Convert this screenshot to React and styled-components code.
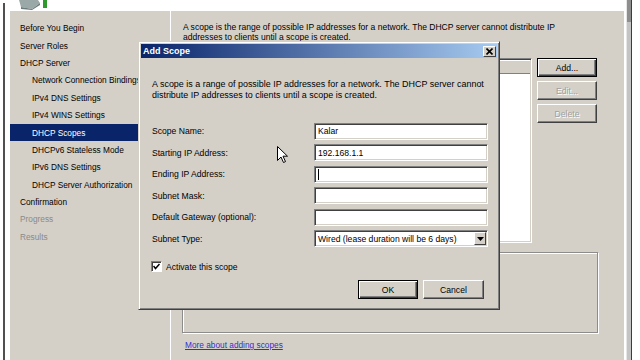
import styled, { createGlobalStyle, css } from 'styled-components';

const Global = createGlobalStyle`
  html, body { margin: 0; padding: 0; background: #fff; }
  body {
    font-family: "Liberation Sans", Arial, sans-serif;
    font-size: 8.6px;
    color: #000;
  }
`;

const Screen = styled.div`
  position: relative;
  width: 640px;
  height: 360px;
  overflow: hidden;
  display: flex;
  background: #fff;
`;

const FrameEdge = styled.div`
  width: 10px;
  flex: none;
  box-sizing: border-box;
  padding: 3px 0 0 3px;
`;

const FrameLine = styled.div`
  width: 2px;
  height: 100%;
  background: #505050;
`;

const Main = styled.div`
  flex: 1;
  display: flex;
  flex-direction: column;
`;

const TopStrip = styled.div`
  height: 11px;
  flex: none;
  padding-left: 8px;
  display: flex;
  align-items: flex-start;
`;

const Panels = styled.div`
  flex: 1;
  display: flex;
  background: #d4d0c8;
`;

const Nav = styled.div`
  width: 160px;
  flex: none;
  padding-top: 8.5px;
  border-right: 1px solid #fff;
`;

const NavItem = styled.div`
  height: 17.4px;
  display: flex;
  align-items: center;
  white-space: nowrap;
  font-size: 8.3px;
  padding-left: ${p => (p.$sub ? 22 : 10)}px;
  color: ${p => (p.$muted ? '#8a8a8a' : '#000')};
  ${p => p.$active && css`
    background: #0a246a;
    color: #fff;
  `}
`;

const Content = styled.div`
  flex: 1;
  padding: 11px 0 0 11px;
  display: flex;
  flex-direction: column;
`;

const Intro = styled.div`
  margin-left: 1px;
  line-height: 10px;
  white-space: nowrap;
  font-size: 8.55px;
`;

const ListRow = styled.div`
  margin-top: 16px;
  height: 185px;
  display: flex;
  gap: 5px;
`;

const ListBox = styled.div`
  width: 350px;
  box-sizing: border-box;
  background: #fff;
  border: 1px solid;
  border-color: #808080 #fff #fff #808080;
  box-shadow: inset 1px 1px 0 #404040, inset -1px -1px 0 #d4d0c8;
  padding: 1px;
`;

const ListHeader = styled.div`
  height: 13px;
  background: #d4d0c8;
  border-bottom: 1px solid #808080;
  box-shadow: inset 1px 1px 0 #fff;
`;

const SideButtons = styled.div`
  display: flex;
  flex-direction: column;
  gap: 4px;
`;

const WinButton = styled.button`
  width: ${p => p.$w || 60}px;
  height: 19px;
  box-sizing: border-box;
  padding: 0;
  font-family: inherit;
  font-size: 8.6px;
  background: #d4d0c8;
  color: #000;
  border: 1px solid;
  border-color: #fff #404040 #404040 #fff;
  box-shadow: inset -1px -1px 0 #808080;
  ${p => p.$default && css`
    border: 1px solid #000;
    box-shadow: inset 1px 1px 0 #fff, inset -1px -1px 0 #404040, inset -2px -2px 0 #808080;
  `}
  &:disabled {
    color: #a0a0a0;
    text-shadow: 1px 1px 0 #fff;
  }
`;

const LowerBox = styled.div`
  margin-top: 9px;
  width: 416px;
  height: 81px;
  box-sizing: border-box;
  border: 1px solid #8c8c8c;
  box-shadow: 1px 1px 0 #fff, inset 1px 1px 0 #fff;
`;

const MoreLink = styled.a`
  margin: 7px 0 0 3px;
  color: #3030d0;
  text-decoration: underline;
  font-size: 8.3px;
`;

const ScrollEdge = styled.div`
  width: 14px;
  flex: none;
  display: flex;
  padding-left: 2px;
`;

const ScrollTrack = styled.div`
  width: 4px;
  background: #c4c4c4;
  border-left: 1px solid #e6e6e6;
  border-right: 1px solid #3c3c3c;
  display: flex;
  flex-direction: column;
`;

const ScrollThumb = styled.div`
  height: 22px;
  background: #8e8e8e;
`;

const Dialog = styled.div`
  position: absolute;
  left: 138px;
  top: 41px;
  width: 362px;
  height: 269px;
  box-sizing: border-box;
  padding: 2px;
  background: #d4d0c8;
  border: 1px solid;
  border-color: #d4d0c8 #404040 #404040 #d4d0c8;
  box-shadow: inset 1px 1px 0 #fff, inset -1px -1px 0 #808080;
  display: flex;
  flex-direction: column;
`;

const TitleBar = styled.div`
  height: 14px;
  flex: none;
  display: flex;
  align-items: center;
  justify-content: space-between;
  padding: 0 1px 0 2px;
  background: linear-gradient(to right, #0a246a, #a6caf0);
  color: #fff;
  font-weight: bold;
  font-size: 9px;
`;

const CloseBox = styled.div`
  width: 13px;
  height: 11px;
  box-sizing: border-box;
  background: #d4d0c8;
  border: 1px solid;
  border-color: #fff #404040 #404040 #fff;
  display: flex;
  align-items: center;
  justify-content: center;
`;

const DialogBody = styled.div`
  flex: 1;
  padding: 21px 11px 0 11px;
  display: flex;
  flex-direction: column;
`;

const DialogText = styled.div`
  line-height: 11px;
  white-space: nowrap;
  font-size: 8.95px;
`;

const Form = styled.div`
  margin-top: 21.5px;
  display: grid;
  grid-template-columns: 162px 174px;
  grid-auto-rows: 17px;
  row-gap: 4.6px;
  align-items: center;
`;

const Label = styled.div`
  white-space: nowrap;
`;

const Field = styled.div`
  height: 17px;
  box-sizing: border-box;
  background: #fff;
  border: 1px solid;
  border-color: #808080 #fff #fff #808080;
  box-shadow: inset 1px 1px 0 #404040, inset -1px -1px 0 #d4d0c8;
  padding: 0 3px;
  display: flex;
  align-items: center;
  white-space: nowrap;
  overflow: hidden;
`;

const Caret = styled.span`
  width: 1px;
  height: 11px;
  background: #000;
`;

const DropButton = styled.div`
  margin-left: auto;
  margin-right: -2px;
  width: 12px;
  height: 13px;
  flex: none;
  box-sizing: border-box;
  background: #d4d0c8;
  border: 1px solid;
  border-color: #fff #404040 #404040 #fff;
  display: flex;
  align-items: center;
  justify-content: center;
`;

const CheckRow = styled.div`
  margin: 14px 0 0 -1px;
  display: flex;
  align-items: center;
  gap: 4px;
`;

const CheckBox = styled.div`
  width: 11px;
  height: 11px;
  box-sizing: border-box;
  background: #fff;
  border: 1px solid;
  border-color: #808080 #fff #fff #808080;
  box-shadow: inset 1px 1px 0 #404040;
  display: flex;
  align-items: center;
  justify-content: center;
`;

const DialogButtons = styled.div`
  margin-top: 8px;
  padding-right: 2px;
  display: flex;
  justify-content: flex-end;
  gap: 5px;
`;

const Cursor = styled.svg`
  position: absolute;
  left: 277px;
  top: 146px;
`;

const navItems = [
  { t: 'Before You Begin' },
  { t: 'Server Roles' },
  { t: 'DHCP Server' },
  { t: 'Network Connection Bindings', sub: true },
  { t: 'IPv4 DNS Settings', sub: true },
  { t: 'IPv4 WINS Settings', sub: true },
  { t: 'DHCP Scopes', sub: true, active: true },
  { t: 'DHCPv6 Stateless Mode', sub: true },
  { t: 'IPv6 DNS Settings', sub: true },
  { t: 'DHCP Server Authorization', sub: true },
  { t: 'Confirmation' },
  { t: 'Progress', muted: true },
  { t: 'Results', muted: true },
];

export default function App() {
  return (
    <Screen>
      <Global />
      <FrameEdge><FrameLine /></FrameEdge>
      <Main>
        <TopStrip>
          <svg width="32" height="10" viewBox="0 0 32 10">
            <path d="M1 0 L20 0 L22 3 L14 9 L3 7 Z" fill="#9aa8a8" />
            <path d="M3 7 L14 9 L22 3 L22 5 L14 10 L3 9 Z" fill="#6c7a7a" />
            <rect x="25" y="0" width="4" height="8" fill="#2e9a2e" />
          </svg>
        </TopStrip>
        <Panels>
          <Nav>
            {navItems.map(n => (
              <NavItem key={n.t} $sub={n.sub} $active={n.active} $muted={n.muted}>{n.t}</NavItem>
            ))}
          </Nav>
          <Content>
            <Intro>
              A scope is the range of possible IP addresses for a network. The DHCP server cannot distribute IP<br />
              addresses to clients until a scope is created.
            </Intro>
            <ListRow>
              <ListBox><ListHeader /></ListBox>
              <SideButtons>
                <WinButton $default>Add...</WinButton>
                <WinButton disabled>Edit...</WinButton>
                <WinButton disabled>Delete</WinButton>
              </SideButtons>
            </ListRow>
            <LowerBox />
            <MoreLink>More about adding scopes</MoreLink>
          </Content>
        </Panels>
      </Main>
      <ScrollEdge>
        <ScrollTrack><ScrollThumb /></ScrollTrack>
      </ScrollEdge>

      <Dialog>
        <TitleBar>
          <span>Add Scope</span>
          <CloseBox>
            <svg width="7" height="7" viewBox="0 0 7 7">
              <path d="M0.5 0.5 L6.5 6.5 M6.5 0.5 L0.5 6.5" stroke="#000" strokeWidth="1.6" />
            </svg>
          </CloseBox>
        </TitleBar>
        <DialogBody>
          <DialogText>
            A scope is a range of possible IP addresses for a network. The DHCP server cannot<br />
            distribute IP addresses to clients until a scope is created.
          </DialogText>
          <Form>
            <Label>Scope Name:</Label>
            <Field>Kalar</Field>
            <Label>Starting IP Address:</Label>
            <Field>192.168.1.1</Field>
            <Label>Ending IP Address:</Label>
            <Field><Caret /></Field>
            <Label>Subnet Mask:</Label>
            <Field />
            <Label>Default Gateway (optional):</Label>
            <Field />
            <Label>Subnet Type:</Label>
            <Field>
              Wired (lease duration will be 6 days)
              <DropButton>
                <svg width="7" height="4" viewBox="0 0 7 4"><path d="M0 0 L7 0 L3.5 4 Z" fill="#000" /></svg>
              </DropButton>
            </Field>
          </Form>
          <CheckRow>
            <CheckBox>
              <svg width="7" height="7" viewBox="0 0 7 7">
                <path d="M0.5 3 L2.5 5.5 L6.5 1" stroke="#000" strokeWidth="1.5" fill="none" />
              </svg>
            </CheckBox>
            <span>Activate this scope</span>
          </CheckRow>
          <DialogButtons>
            <WinButton $default>OK</WinButton>
            <WinButton $w={61}>Cancel</WinButton>
          </DialogButtons>
        </DialogBody>
      </Dialog>

      <Cursor width="12" height="18" viewBox="0 0 12 18">
        <path d="M0.5 0.5 L0.5 14.5 L4 11 L6.5 16.5 L8.5 15.6 L6 10.2 L10.5 10.2 Z" fill="#fff" stroke="#000" strokeWidth="1" />
      </Cursor>
    </Screen>
  );
}
